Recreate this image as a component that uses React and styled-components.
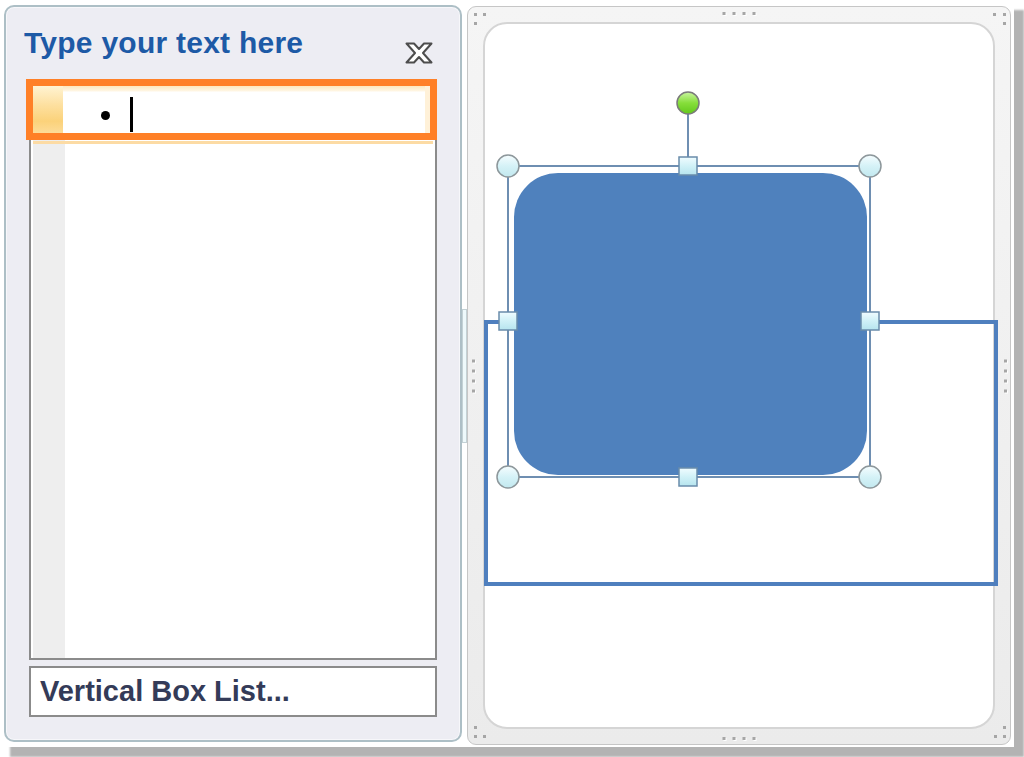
import React from 'react';
import styled, { createGlobalStyle, css } from 'styled-components';

const GlobalStyle = createGlobalStyle`
  html, body {
    margin: 0;
    padding: 0;
    background: #ffffff;
  }
  body {
    font-family: "Liberation Sans", Arial, sans-serif;
  }
`;

const Page = styled.div`
  width: 1024px;
  height: 757px;
  overflow: hidden;
  background: #ffffff;
`;

// Whole screenshot, with its drop shadow
const Screen = styled.div`
  width: 1014px;
  height: 747px;
  box-sizing: border-box;
  padding: 5px 0 0 4px;
  display: flex;
  align-items: flex-start;
  background: #ffffff;
  box-shadow: 10px 10px 2px #b3b3b3;
`;

/* ---------- Text pane ---------- */

const TextPane = styled.section`
  width: 458px;
  height: 737px;
  box-sizing: border-box;
  display: flex;
  flex-direction: column;
  padding-bottom: 23px;
  background: #ededf3;
  border: 2px solid #adbfc6;
  border-radius: 10px;
  box-shadow: inset 0 0 0 1px #f7f7fa;
`;

const PaneHeader = styled.div`
  height: 76px;
  box-sizing: border-box;
  display: flex;
  justify-content: space-between;
  align-items: flex-start;
  padding: 19px 27px 0 18px;
`;

const PaneTitle = styled.div`
  font-size: 30px;
  line-height: 34px;
  font-weight: bold;
  letter-spacing: 0.25px;
  color: #1d5aa6;
`;

const CloseButton = styled.button`
  margin-top: 16px;
  padding: 0;
  border: none;
  background: none;
  width: 28px;
  height: 22px;
  display: block;
  cursor: pointer;
`;

const ListBox = styled.div`
  position: relative;
  flex: 1;
  margin: 0 23px;
  border: 2px solid #8b8b8b;
  background: linear-gradient(
    to right,
    #ffffff 2px,
    #eeeeee 2px,
    #eeeeee 34px,
    #ffffff 34px
  );
`;

const ListRow = styled.div`
  height: 56px;
  margin: 0 2px;
  border-bottom: 3px solid #fcdba4;
`;

const ActiveRow = styled.div`
  position: absolute;
  left: -5px;
  right: -2px;
  top: -6px;
  height: 61px;
  box-sizing: border-box;
  border: 7px solid #ff8027;
  display: flex;
`;

const RowGutter = styled.div`
  width: 30px;
  background: linear-gradient(#fff3d2 0%, #fde0a0 40%, #fbd27a 75%, #fddc98 100%);
`;

const RowBody = styled.div`
  flex: 1;
  display: flex;
  align-items: flex-start;
  padding-top: 6px;
  background: linear-gradient(#fde8bd 0, #fff6e4 5px, #ffffff 6px);
  box-shadow: inset -5px 0 0 #fff1d8;
`;

const Bullet = styled.span`
  width: 9px;
  height: 9px;
  margin: 19px 0 0 38px;
  border-radius: 50%;
  background: #000000;
`;

const Caret = styled.span`
  width: 3px;
  height: 35px;
  margin: 5px 0 0 20px;
  background: #000000;
`;

const LayoutName = styled.div`
  height: 51px;
  box-sizing: border-box;
  margin: 6px 23px 0;
  padding-left: 9px;
  display: flex;
  align-items: center;
  border: 2px solid #8b8b8b;
  background: #ffffff;
  font-size: 29px;
  font-weight: bold;
  color: #343b58;
`;

/* ---------- Splitter ---------- */

const Splitter = styled.div`
  width: 5px;
  height: 134px;
  align-self: center;
  box-sizing: border-box;
  border: 1px solid #c3d1d5;
  background: #eef9fb;
`;

/* ---------- Diagram pane ---------- */

const CanvasFrame = styled.section`
  position: relative;
  width: 544px;
  height: 739px;
  margin-top: 1px;
  box-sizing: border-box;
  padding: 15px;
  border: 1px solid #c6c6c6;
  border-radius: 9px;
  background: linear-gradient(#f5f5f5, #ebebeb);
`;

const Canvas = styled.div`
  position: relative;
  height: 100%;
  box-sizing: border-box;
  border: 2px solid #d5d5d5;
  border-radius: 24px;
  background: #ffffff;
`;

const ShapeLayer = styled.svg`
  position: absolute;
  left: 0;
  top: 0;
  overflow: visible;
`;

const Grip = styled.div`
  position: absolute;
  display: flex;
  gap: 7px;
  ${p => p.$side === 'top' && css`top: 5px; left: 50%; transform: translateX(-50%);`}
  ${p => p.$side === 'bottom' && css`bottom: 4px; left: 50%; transform: translateX(-50%);`}
  ${p => p.$side === 'left' && css`left: 4px; top: 50%; transform: translateY(-50%); flex-direction: column;`}
  ${p => p.$side === 'right' && css`right: 3px; top: 50%; transform: translateY(-50%); flex-direction: column;`}
`;

const GripDot = styled.span`
  width: 3px;
  height: 3px;
  background: #a6a6a6;
  box-shadow: 1px 1px 0 #ffffff;
`;

const cornerStyles = {
  tl: css`left: 6px; top: 6px; box-shadow: 9px 0 #a6a6a6, 0 9px #a6a6a6;`,
  tr: css`right: 4px; top: 6px; box-shadow: -10px 0 #a6a6a6, 0 9px #a6a6a6;`,
  bl: css`left: 6px; bottom: 6px; box-shadow: 0 -9px #a6a6a6, 9px 0 #a6a6a6;`,
  br: css`right: 4px; bottom: 6px; box-shadow: 0 -9px #a6a6a6, -9px 0 #a6a6a6;`,
};

const CornerMark = styled.span`
  position: absolute;
  width: 3px;
  height: 3px;
  background: #a6a6a6;
  ${p => cornerStyles[p.$pos]}
`;

const CloseIcon = () => (
  <svg width="28" height="22" viewBox="0 0 28 22">
    <path
      d="M1.5 1.5 H9 L14 7 L19 1.5 H26.5 L18 11 L26.5 20.5 H19 L14 15 L9 20.5 H1.5 L10 11 Z"
      fill="#ffffff"
      stroke="#4d4d4d"
      strokeWidth="2"
      strokeLinejoin="round"
    />
  </svg>
);

const Grips = ({ side }) => (
  <Grip $side={side}>
    {[0, 1, 2, 3].map(i => <GripDot key={i} />)}
  </Grip>
);

const corners = [[508, 166], [870, 166], [508, 477], [870, 477]];
const sides = [[688, 166], [508, 321], [870, 321], [688, 477]];

const Diagram = () => (
  <ShapeLayer width="508" height="703" viewBox="485 24 508 703">
    <defs>
      <linearGradient id="handleFill" x1="0" y1="0" x2="0" y2="1">
        <stop offset="0" stopColor="#f6fdff" />
        <stop offset="0.5" stopColor="#d5f2f7" />
        <stop offset="1" stopColor="#c2e8ef" />
      </linearGradient>
      <linearGradient id="squareFill" x1="0" y1="0" x2="0" y2="1">
        <stop offset="0" stopColor="#f0fcff" />
        <stop offset="0.5" stopColor="#d0f1f7" />
        <stop offset="1" stopColor="#b6e4ee" />
      </linearGradient>
      <linearGradient id="rotateFill" x1="0" y1="0" x2="0" y2="1">
        <stop offset="0" stopColor="#c9f5a0" />
        <stop offset="0.5" stopColor="#86de3a" />
        <stop offset="1" stopColor="#62c81c" />
      </linearGradient>
    </defs>

    <rect x="486" y="322" width="510" height="262" fill="none" stroke="#4f7fbe" strokeWidth="4" />
    <rect x="514" y="173" width="353" height="302" rx="44" fill="#4f81bd" />

    <line x1="688" y1="114" x2="688" y2="166" stroke="#3f6a98" strokeWidth="1.5" />
    <rect x="508" y="166" width="362" height="311" fill="none" stroke="#3f6a98" strokeWidth="1.5" />

    {corners.map(([cx, cy]) => (
      <circle key={`c${cx}-${cy}`} cx={cx} cy={cy} r="11" fill="url(#handleFill)" stroke="#8d979b" strokeWidth="1.5" />
    ))}
    {sides.map(([cx, cy]) => (
      <rect key={`s${cx}-${cy}`} x={cx - 9} y={cy - 9} width="18" height="18" fill="url(#squareFill)" stroke="#6a8cab" strokeWidth="1.5" />
    ))}
    <circle cx="688" cy="103" r="11" fill="url(#rotateFill)" stroke="#7a7a7a" strokeWidth="1.5" />
  </ShapeLayer>
);

const App = () => {
  return (
    <Page>
      <GlobalStyle />
      <Screen>
        <TextPane>
          <PaneHeader>
            <PaneTitle>Type your text here</PaneTitle>
            <CloseButton aria-label="Close">
              <CloseIcon />
            </CloseButton>
          </PaneHeader>

          <ListBox>
            <ListRow />
            <ActiveRow>
              <RowGutter />
              <RowBody>
                <Bullet />
                <Caret />
              </RowBody>
            </ActiveRow>
          </ListBox>

          <LayoutName>Vertical Box List...</LayoutName>
        </TextPane>

        <Splitter />

        <CanvasFrame>
          <Canvas>
            <Diagram />
          </Canvas>
          <Grips side="top" />
          <Grips side="bottom" />
          <Grips side="left" />
          <Grips side="right" />
          <CornerMark $pos="tl" />
          <CornerMark $pos="tr" />
          <CornerMark $pos="bl" />
          <CornerMark $pos="br" />
        </CanvasFrame>
      </Screen>
    </Page>
  );
};

export default App;
